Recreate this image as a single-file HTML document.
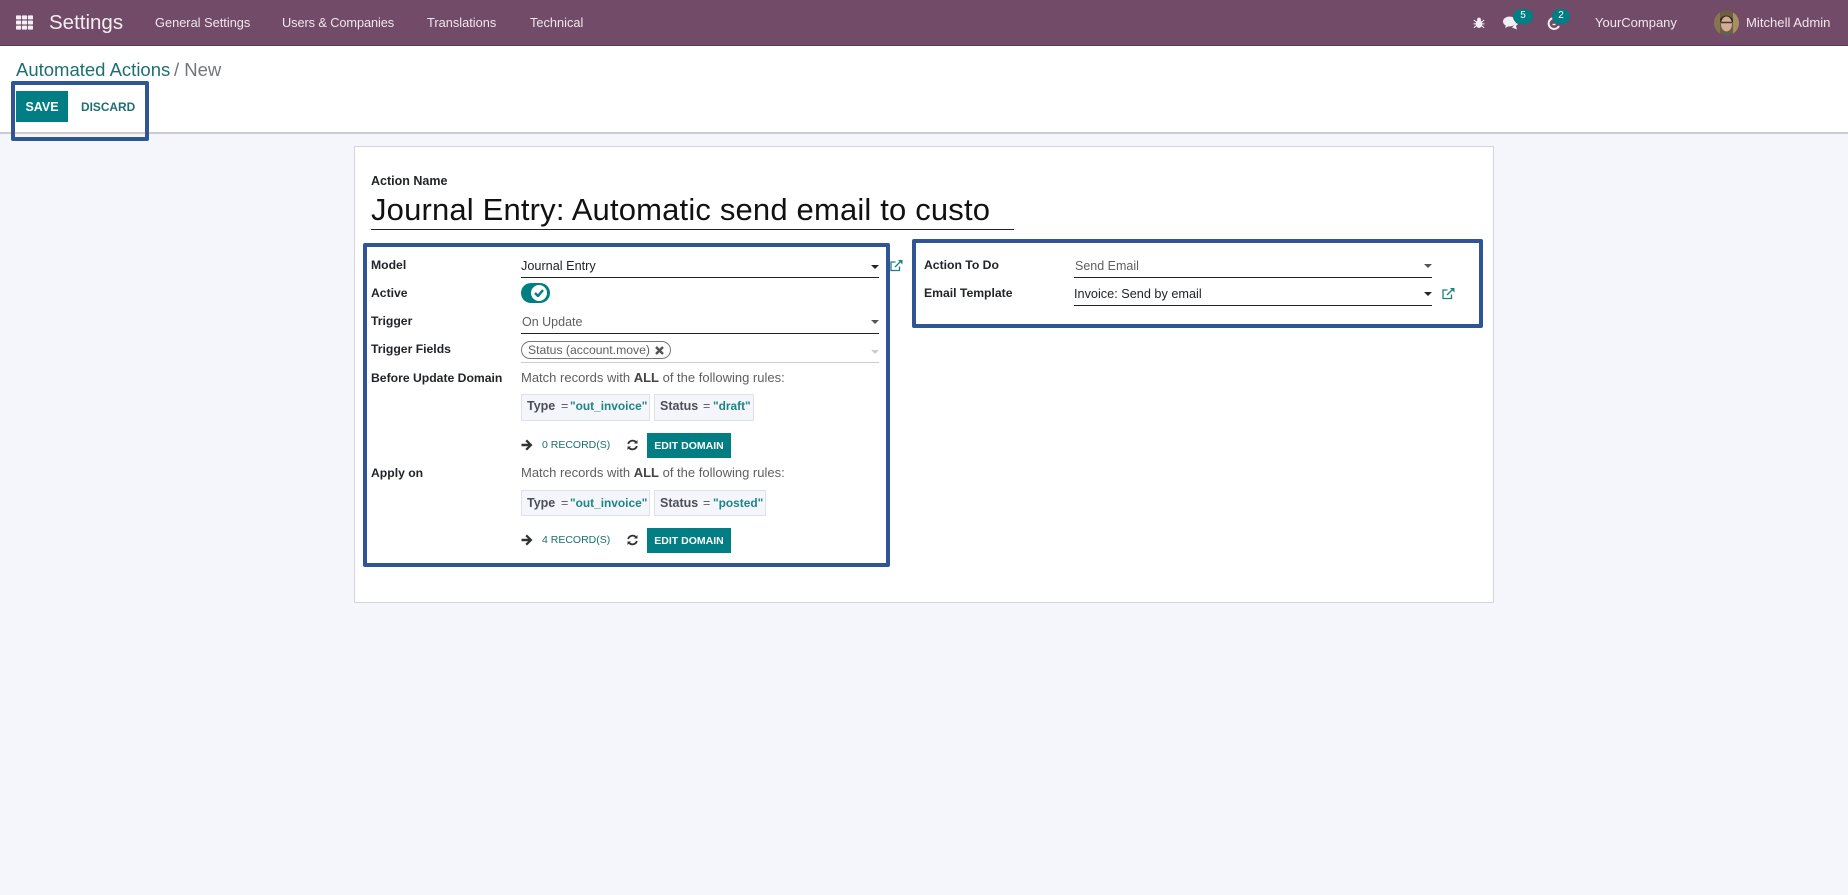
<!DOCTYPE html>
<html lang="en">
<head>
<meta charset="utf-8">
<title>Automated Actions / New</title>
<style>
html,body{margin:0;padding:0;width:1848px;height:895px;overflow:hidden;background:#f5f6fb;font-family:"Liberation Sans",sans-serif;font-size:13px;color:#4c4c4c}
.a{position:absolute}
.t{position:absolute;height:20px;line-height:20px;white-space:nowrap}
header{position:absolute;left:0;top:0;width:1848px;height:45px;background:#714b67;border-bottom:1px solid #5a3c52}
header .t{color:#efe7ed;font-size:12.8px}
.cp{position:absolute;left:0;top:46px;width:1848px;height:86px;background:#fff;border-bottom:2px solid #ccc}
.card{position:absolute;left:354px;top:146px;width:1138px;height:455px;background:#fff;border:1px solid #d4d6dc}
.blue{position:absolute;border:4px solid #2f5597;border-radius:2px;box-sizing:border-box}
.l{font-weight:bold;color:#212529;font-size:12.2px}
.v{color:#212529;font-size:12.7px}
.g{color:#5f5f5f;font-size:12.5px}
.m{color:#5f5f5f;font-size:13px}
.line{position:absolute;height:1px;background:#212529}
.arr{position:absolute;width:0;height:0;border-left:4px solid transparent;border-right:4px solid transparent;border-top:4px solid #212529}
.chip{position:absolute;box-sizing:border-box;background:#f5f6fb;border:1px solid #dfe1e8}
.b{font-weight:bold;color:#4a4f59;font-size:12.5px}
.tl{font-weight:bold;color:#1c8585;font-size:11.9px}
.btn{position:absolute;background:#017e84;color:#fff;text-align:center;font-weight:bold;font-size:10.5px;box-sizing:border-box}
.rec{color:#17706f;font-size:10.5px;font-weight:normal}
</style>
</head>
<body>
<header>
  <svg class="a" style="left:16px;top:15px" width="17" height="15" viewBox="0 0 18 15" fill="#f3eef2">
    <rect x="0" y="0" width="5.4" height="4.2" rx=".8"/><rect x="6.3" y="0" width="5.4" height="4.2" rx=".8"/><rect x="12.6" y="0" width="5.4" height="4.2" rx=".8"/>
    <rect x="0" y="5.4" width="5.4" height="4.2" rx=".8"/><rect x="6.3" y="5.4" width="5.4" height="4.2" rx=".8"/><rect x="12.6" y="5.4" width="5.4" height="4.2" rx=".8"/>
    <rect x="0" y="10.8" width="5.4" height="4.2" rx=".8"/><rect x="6.3" y="10.8" width="5.4" height="4.2" rx=".8"/><rect x="12.6" y="10.8" width="5.4" height="4.2" rx=".8"/>
  </svg>
  <span class="t" style="left:49px;top:13px;font-size:20.5px;color:#f3eef2">Settings</span>
  <span class="t" style="left:155px;top:13px">General Settings</span>
  <span class="t" style="left:282px;top:13px;letter-spacing:-.1px">Users &amp; Companies</span>
  <span class="t" style="left:427px;top:13px">Translations</span>
  <span class="t" style="left:530px;top:13px">Technical</span>

  <svg class="a" style="left:1473px;top:17px" width="12" height="12" viewBox="0 0 14 13" fill="#f3eef2">
    <ellipse cx="7" cy="7.5" rx="3.8" ry="4.8"/><circle cx="7" cy="2.5" r="2.2"/>
    <path d="M1 3l3 2.5M13 3l-3 2.5M0.5 7.5h3M13.5 7.5h-3M1 12l3-2.5M13 12l-3-2.5" stroke="#f3eef2" stroke-width="1.2" fill="none"/>
  </svg>
  <svg class="a" style="left:1503px;top:16px" width="16" height="14" viewBox="0 0 16 14" fill="#f3eef2">
    <ellipse cx="6.5" cy="5.5" rx="6.5" ry="5"/><path d="M3 9l-1 3 4-2z"/><path d="M9 11.5l5 2-1-3.5 2-2-2-1z"/>
  </svg>
  <div class="a" style="left:1513px;top:9px;width:20px;height:15px;border-radius:8px;background:#017e84"></div>
  <span class="t" style="left:1513px;top:6px;width:20px;text-align:center;font-size:10px;color:#fff">5</span>
  <svg class="a" style="left:1546px;top:16px" width="14" height="14" viewBox="0 0 14 14" fill="none" stroke="#f3eef2" stroke-width="2">
    <path d="M9 2a5.5 5.5 0 1 0 4 8"/><path d="M6.5 8.5h3" stroke-width="1.4"/>
  </svg>
  <div class="a" style="left:1552px;top:9px;width:18px;height:15px;border-radius:8px;background:#017e84"></div>
  <span class="t" style="left:1552px;top:6px;width:18px;text-align:center;font-size:10px;color:#fff">2</span>

  <span class="t" style="left:1595px;top:13px;font-size:13px">YourCompany</span>
  <svg class="a" style="left:1714px;top:10px" width="25" height="26" viewBox="0 0 25 26">
    <defs><clipPath id="cav"><circle cx="12.5" cy="13" r="12.5"/></clipPath></defs>
    <g clip-path="url(#cav)">
      <rect width="25" height="26" fill="#6f5e44"/>
      <rect x="0" y="0" width="6" height="26" fill="#87754f"/>
      <rect x="19" y="0" width="6" height="26" fill="#a6905f"/>
      <path d="M6 9q6-7 13 0v3H6z" fill="#2f2925"/>
      <ellipse cx="12.5" cy="14" rx="5.5" ry="7.5" fill="#d3ad96"/>
      <path d="M7 12.5h11" stroke="#3d3a38" stroke-width="1.6"/>
      <path d="M4 26q8-6 17 0z" fill="#55626c"/>
    </g>
  </svg>
  <span class="t" style="left:1746px;top:13px;font-size:13.1px">Mitchell Admin</span>
</header>

<div class="cp">
  <span class="t" style="left:16px;top:13px;font-size:18.5px;line-height:22px;height:22px;color:#1d6f72">Automated Actions</span>
  <span class="t" style="left:174px;top:13px;font-size:18.5px;line-height:22px;height:22px;color:#72767a">/ New</span>
  <div class="btn" style="left:16px;top:45px;width:52px;height:31px;line-height:32px;font-size:12.5px">SAVE</div>
  <span class="t" style="left:81px;top:51px;font-weight:bold;font-size:11.9px;color:#1d6f72">DISCARD</span>
</div>

<div class="blue" style="left:11px;top:81px;width:138px;height:60px"></div>

<div class="card"></div>

<span class="t l" style="left:371px;top:171px;font-size:12.5px">Action Name</span>
<div class="a" style="left:371px;top:190px;width:619px;height:40px;overflow:hidden;white-space:nowrap;line-height:40px;font-size:31px;letter-spacing:.17px;color:#111">Journal Entry: Automatic send email to custo</div>
<div class="line" style="left:371px;top:229px;width:643px"></div>

<div class="blue" style="left:363px;top:243px;width:527px;height:324px"></div>
<div class="blue" style="left:912px;top:239px;width:571px;height:89px"></div>

<!-- left group -->
<span class="t l" style="left:371px;top:255px">Model</span>
<span class="t v" style="left:521px;top:256px">Journal Entry</span>
<div class="line" style="left:521px;top:277px;width:358px"></div>
<div class="arr" style="left:871px;top:265px"></div>
<svg class="a" style="left:890px;top:259px" width="13" height="13" viewBox="0 0 13 13" fill="none" stroke="#1c7f82" stroke-width="1.3">
  <path d="M9.5 7.5v4h-8.5v-8.5h4.5"/><path d="M5 8l6.5-6.5"/><path d="M8 1h4.5v4.5z" fill="#1c7f82" stroke="none"/>
</svg>

<span class="t l" style="left:371px;top:283px">Active</span>
<div class="a" style="left:521px;top:283px;width:29px;height:20px;border-radius:10px;background:#017e84"></div>
<div class="a" style="left:531px;top:285px;width:16px;height:16px;border-radius:50%;background:#fff"></div>
<svg class="a" style="left:534px;top:289px" width="10" height="8" viewBox="0 0 10 8" fill="none" stroke="#017e84" stroke-width="2.4"><path d="M1 4l3 3 5-6"/></svg>

<span class="t l" style="left:371px;top:311px">Trigger</span>
<span class="t g" style="left:522px;top:312px">On Update</span>
<div class="line" style="left:521px;top:333px;width:358px"></div>
<div class="arr" style="left:871px;top:320px;border-top-color:#555"></div>

<span class="t l" style="left:371px;top:339px">Trigger Fields</span>
<div class="a" style="left:521px;top:341px;width:150px;height:18px;border:1px solid #777;border-radius:10px;box-sizing:border-box"></div>
<span class="t" style="left:528px;top:340px;font-size:12.2px;color:#5f5f5f">Status (account.move)</span>
<svg class="a" style="left:655px;top:346px" width="9" height="9" viewBox="0 0 9 9" stroke="#555" stroke-width="2.4"><path d="M1 1l7 7M8 1l-7 7"/></svg>
<div class="line" style="left:521px;top:362px;width:358px;background:#ccc"></div>
<div class="arr" style="left:871px;top:350px;border-top-color:#ccc"></div>

<span class="t l" style="left:371px;top:368px">Before Update Domain</span>
<span class="t m" style="left:521px;top:368px">Match records with <b style="color:#444">ALL</b> of the following rules:</span>

<div class="chip" style="left:521px;top:394px;width:129px;height:27px"></div>
<span class="t b" style="left:527px;top:396px">Type</span>
<span class="t g" style="left:561px;top:396px">=</span>
<span class="t tl" style="left:570px;top:396px">"out_invoice"</span>
<div class="chip" style="left:654px;top:394px;width:100px;height:27px"></div>
<span class="t b" style="left:660px;top:396px">Status</span>
<span class="t g" style="left:703px;top:396px">=</span>
<span class="t tl" style="left:713px;top:396px">"draft"</span>

<svg class="a" style="left:521px;top:439px" width="12" height="12" viewBox="0 0 12 12" fill="#333"><path d="M6 0.5l5.5 5.5-5.5 5.5-1.6-1.6 2.7-2.7H0.5V4.8h6.6L4.4 2.1z"/></svg>
<span class="t rec" style="left:542px;top:435px">0 RECORD(S)</span>
<svg class="a" style="left:627px;top:439px" width="11" height="12" viewBox="0 0 11 12" fill="none" stroke="#333" stroke-width="1.8"><path d="M1.2 5a4.5 4.5 0 0 1 8-1.5"/><path d="M9.8 7a4.5 4.5 0 0 1-8 1.5"/><path d="M10.5 1v3.5H7" fill="#333" stroke="none"/><path d="M0.5 11V7.5H4" fill="#333" stroke="none"/></svg>
<div class="btn" style="left:647px;top:433px;width:84px;height:25px;line-height:26px">EDIT DOMAIN</div>

<span class="t l" style="left:371px;top:463px">Apply on</span>
<span class="t m" style="left:521px;top:463px">Match records with <b style="color:#444">ALL</b> of the following rules:</span>

<div class="chip" style="left:521px;top:490px;width:129px;height:26px"></div>
<span class="t b" style="left:527px;top:493px">Type</span>
<span class="t g" style="left:561px;top:493px">=</span>
<span class="t tl" style="left:570px;top:493px">"out_invoice"</span>
<div class="chip" style="left:654px;top:490px;width:112px;height:26px"></div>
<span class="t b" style="left:660px;top:493px">Status</span>
<span class="t g" style="left:703px;top:493px">=</span>
<span class="t tl" style="left:713px;top:493px">"posted"</span>

<svg class="a" style="left:521px;top:534px" width="12" height="12" viewBox="0 0 12 12" fill="#333"><path d="M6 0.5l5.5 5.5-5.5 5.5-1.6-1.6 2.7-2.7H0.5V4.8h6.6L4.4 2.1z"/></svg>
<span class="t rec" style="left:542px;top:530px">4 RECORD(S)</span>
<svg class="a" style="left:627px;top:534px" width="11" height="12" viewBox="0 0 11 12" fill="none" stroke="#333" stroke-width="1.8"><path d="M1.2 5a4.5 4.5 0 0 1 8-1.5"/><path d="M9.8 7a4.5 4.5 0 0 1-8 1.5"/><path d="M10.5 1v3.5H7" fill="#333" stroke="none"/><path d="M0.5 11V7.5H4" fill="#333" stroke="none"/></svg>
<div class="btn" style="left:647px;top:528px;width:84px;height:25px;line-height:26px">EDIT DOMAIN</div>

<!-- right group -->
<span class="t l" style="left:924px;top:255px">Action To Do</span>
<span class="t g" style="left:1075px;top:256px">Send Email</span>
<div class="line" style="left:1074px;top:277px;width:358px"></div>
<div class="arr" style="left:1424px;top:264px;border-top-color:#555"></div>

<span class="t l" style="left:924px;top:283px">Email Template</span>
<span class="t v" style="left:1074px;top:284px">Invoice: Send by email</span>
<div class="line" style="left:1074px;top:305px;width:358px"></div>
<div class="arr" style="left:1424px;top:292px"></div>
<svg class="a" style="left:1442px;top:287px" width="13" height="13" viewBox="0 0 13 13" fill="none" stroke="#1c7f82" stroke-width="1.3">
  <path d="M9.5 7.5v4h-8.5v-8.5h4.5"/><path d="M5 8l6.5-6.5"/><path d="M8 1h4.5v4.5z" fill="#1c7f82" stroke="none"/>
</svg>
</body>
</html>
